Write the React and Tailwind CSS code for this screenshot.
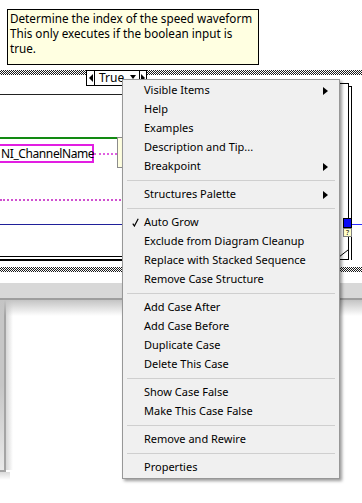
import React from "react";

const checker =
  "bg-[repeating-conic-gradient(#1a1a1a_0%_25%,#ffffff_0%_50%)] bg-[length:2px_2px]";

const menu = [
  { label: "Visible Items", sub: true },
  { label: "Help" },
  { label: "Examples" },
  { label: "Description and Tip..." },
  { label: "Breakpoint", sub: true },
  "sep",
  { label: "Structures Palette", sub: true },
  "sep",
  { label: "Auto Grow", checked: true },
  { label: "Exclude from Diagram Cleanup" },
  { label: "Replace with Stacked Sequence" },
  { label: "Remove Case Structure" },
  "sep",
  { label: "Add Case After" },
  { label: "Add Case Before" },
  { label: "Duplicate Case" },
  { label: "Delete This Case" },
  "sep",
  { label: "Show Case False" },
  { label: "Make This Case False" },
  "sep",
  { label: "Remove and Rewire" },
  "sep",
  { label: "Properties" },
];

const MenuItem = ({ item }) => {
  if (item === "sep") {
    return (
      <div className="flex h-[9px] items-center px-[4px]">
        <div className="h-px w-full bg-[#cfcfcf]" />
      </div>
    );
  }
  return (
    <div className="flex h-[19px] items-center text-[11px] text-black">
      <div className="flex w-[21px] justify-end pr-[5px]">
        {item.checked && (
          <svg width="7" height="9" viewBox="0 0 7 9">
            <path d="M0.8 5.6 L2.4 8 L6.2 0.8" fill="none" stroke="#000" strokeWidth="1.2" />
          </svg>
        )}
      </div>
      <span className="whitespace-nowrap">{item.label}</span>
      {item.sub && (
        <div className="mr-[11px] ml-auto h-0 w-0 border-y-[4px] border-l-[5px] border-y-transparent border-l-black" />
      )}
    </div>
  );
};

const Wire = ({ className }) => <div className={`absolute left-0 w-[124px] ${className}`} />;

const App = () => {
  return (
    <div className="relative flex h-[503px] w-[362px] flex-col overflow-hidden bg-white font-['Noto_Sans',sans-serif]">
      {/* block diagram canvas */}
      <div className="relative h-[283px] shrink-0">
        <div className={`absolute top-[70px] left-0 h-[5px] w-full ${checker}`} />
        <div className={`absolute top-[267px] left-0 h-[5px] w-full ${checker}`} />

        <Wire className="top-[94px] h-px bg-[#222]" />
        <Wire className="top-[137px] h-[2px] w-[118px] border-t border-b border-[#128a12] border-b-dotted" />
        <Wire className="top-[199px] h-[2px] border-t-2 border-dotted border-[#d050d0]" />
        <Wire className="top-[224px] h-px bg-[#20209a]" />
        <Wire className="top-[256px] h-px bg-black" />
        <Wire className="top-[259px] h-[2px] bg-black" />

        {/* tunnel node */}
        <div className="absolute top-[137px] left-[117px] h-[31px] w-[20px] border border-[#8c8c8c] bg-[#ffffe1]" />

        {/* string constant with its wire */}
        <div className="absolute top-[144px] left-[-2px] flex items-center">
          <div className="flex h-[19px] w-[96px] items-center border-2 border-[#e21ee2] bg-white pl-[1px] text-[12px] leading-none tracking-[-0.4px] text-black">
            NI_ChannelName
          </div>
          <div className="h-[2px] w-[23px] border-t-2 border-dotted border-[#e060e0]" />
        </div>

        {/* case selector */}
        <div className="absolute top-[70px] left-[86px] flex h-[16px] w-[61px] border border-black bg-white">
          <div className="flex w-[8px] items-center justify-center border-r border-black">
            <div className="h-0 w-0 border-y-[4px] border-r-[4px] border-y-transparent border-r-black" />
          </div>
          <div className="flex flex-1 items-center pl-[4px] text-[12px] leading-none text-black">
            True
            <div className="mt-[-2px] mr-[3px] ml-auto h-0 w-0 border-x-[3px] border-t-[4px] border-x-transparent border-t-black" />
          </div>
          <div className="flex w-[7px] items-center justify-center border-l border-black">
            <div className="h-0 w-0 border-y-[4px] border-l-[4px] border-y-transparent border-l-black" />
          </div>
        </div>

        {/* right edge of the stacked case frame */}
        <div className="absolute top-[83px] left-[338px] h-[177px] w-[11px] border-t border-r border-b border-black" />
        <div className="absolute top-[86px] left-[348px] h-[174px] w-[4px] border-t border-r border-black" />
        <svg className="absolute top-[248px] left-[338px]" width="11" height="10" viewBox="0 0 11 10">
          <path d="M1 9 L10 2" stroke="#000" strokeWidth="1" fill="none" />
        </svg>
        <div className="absolute top-[218px] left-[343px] flex items-start">
          <div className="flex flex-col">
            <div className="h-[10px] w-[9px] border border-black bg-[#0a0af5]" />
            <div className="flex h-[9px] w-[9px] items-center justify-center border border-[#808080] bg-[#ffffc8] text-[7px] leading-none text-black">
              ?
            </div>
          </div>
          <div className="mt-[6px] h-px w-[12px] bg-[#2a2aff]" />
        </div>
      </div>

      {/* horizontal scrollbar strip */}
      <div className="h-[15px] shrink-0 bg-[#d8d8d8]" />
      <div className="h-[2px] shrink-0 bg-[#9e9e9e]" />

      {/* window behind */}
      <div className="relative flex flex-1 items-start">
        <div className="absolute inset-x-0 top-0 h-[16px] bg-linear-to-b from-[#c4c4c4] to-transparent" />
        <div className="flex flex-col">
          <div className="flex h-[170px]">
            <div className="w-[4px] bg-linear-to-b from-[#c6c6c6] via-[#c6c6c6] to-[#e9e9e9]" />
            <div className="w-[2px] bg-[#a4a4a4]" />
            <div className="w-[7px] bg-linear-to-r from-[#d6d6d6] to-transparent" />
          </div>
          <div className="h-[2px] w-[6px] bg-[#a4a4a4]" />
          <div className="h-[8px] w-[10px] bg-linear-to-b from-[#dadada] to-transparent" />
        </div>
      </div>

      {/* tooltip */}
      <div className="absolute top-[9px] left-[7px] border border-black bg-[#ffffe1] pt-[1px] pr-[6px] pb-[7px] pl-[2px] text-[11.7px] leading-[15.2px] text-black">
        <div className="whitespace-nowrap">Determine the index of the speed waveform</div>
        <div className="whitespace-nowrap">This only executes if the boolean input is</div>
        <div className="whitespace-nowrap">true.</div>
      </div>

      {/* context menu */}
      <div className="absolute top-[79px] left-[122px] w-[218px] border border-[#979797] bg-[#f0f0f0] py-px shadow-[2px_2px_3px_rgba(0,0,0,0.4)]">
        {menu.map((item, i) => (
          <MenuItem key={i} item={item} />
        ))}
      </div>
    </div>
  );
};

export default App;
